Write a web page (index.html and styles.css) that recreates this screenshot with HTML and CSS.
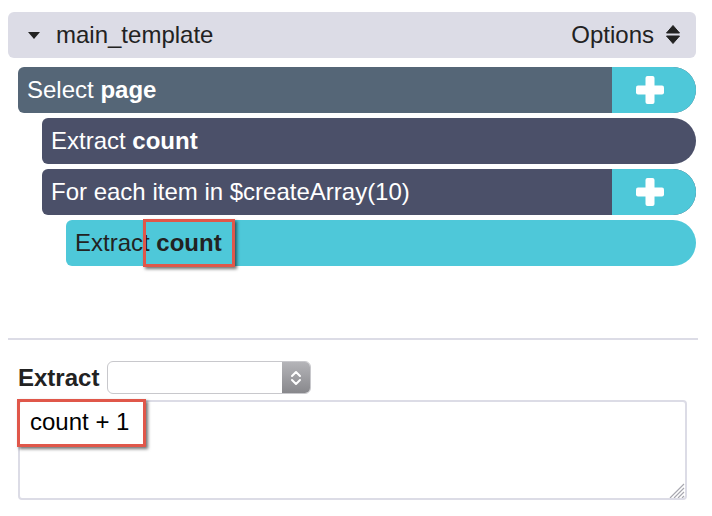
FILE: index.html
```html
<!DOCTYPE html>
<html lang="en">
<head>
  <meta charset="UTF-8" />
  <title>main_template</title>
  <link rel="stylesheet" href="styles.css">
</head>
<body>
  <div class="page">
    <div class="header">
      <svg class="caret" width="12" height="7" viewBox="0 0 12 7"><path d="M0 0H12L6 7Z" fill="#222"/></svg>
      <span class="title">main_template</span>
      <span class="options">Options
        <svg class="sort" width="14" height="20" viewBox="0 0 14 20"><path d="M7 0.5L13.5 8H0.5Z M0.5 11H13.5L7 18.5Z" fill="#222" stroke="#222" stroke-linejoin="round" stroke-width="1"/></svg>
      </span>
    </div>

    <div class="tree">
      <div class="row slate">
        <div class="label">Select <b>page</b></div>
        <div class="plus"><svg width="28" height="28" viewBox="0 0 28 28"><rect x="9.5" y="0" width="9" height="28" rx="2" fill="#fff"/><rect x="0" y="9.5" width="28" height="9" rx="2" fill="#fff"/></svg></div>
      </div>
      <div class="row dark indent1">
        <div class="label">Extract <b>count</b></div>
      </div>
      <div class="row dark indent1">
        <div class="label">For each item in $createArray(10)</div>
        <div class="plus"><svg width="28" height="28" viewBox="0 0 28 28"><rect x="9.5" y="0" width="9" height="28" rx="2" fill="#fff"/><rect x="0" y="9.5" width="28" height="9" rx="2" fill="#fff"/></svg></div>
      </div>
      <div class="row teal indent2">
        <div class="label">Extract <b class="mark mark-row">count</b></div>
      </div>
    </div>

    <div class="divider"></div>

    <div class="editor">
      <div class="field-row">
        <label class="field-label">Extract</label>
        <div class="select">
          <div class="select-arrows"><svg width="12" height="18" viewBox="0 0 12 18"><path d="M2 7L6 3L10 7 M2 11L6 15L10 11" fill="none" stroke="#fff" stroke-width="2" stroke-linecap="round" stroke-linejoin="round"/></svg></div>
        </div>
      </div>
      <div class="code">
        <span class="mark mark-code">count + 1</span>
        <svg class="grip" width="18" height="16" viewBox="0 0 18 16"><path d="M17 2L3 16 M17 6L7 16 M17 10L11 16 M17 14L15 16" stroke="#a8a8b0" stroke-width="1.2"/></svg>
      </div>
    </div>
  </div>
</body>
</html>
```

FILE: styles.css
```css
* { box-sizing: border-box; margin: 0; padding: 0; }
body {
  font-family: 'Liberation Sans', Arial, sans-serif;
  font-size: 24px;
  color: #222;
  background: #fff;
}
.page {
  padding: 12px 16px 0 8px;
}
.header {
  height: 46px;
  background: #dcdce6;
  border-radius: 6px;
  display: flex;
  align-items: center;
  padding: 0 16px 0 20px;
}
.caret { margin-right: 16px; }
.title { flex: 1; }
.options {
  display: flex;
  align-items: center;
  gap: 12px;
}
.tree {
  padding-left: 10px;
  margin-top: 9px;
}
.row {
  height: 46px;
  display: flex;
  border-radius: 6px 23px 23px 6px;
  overflow: hidden;
  margin-bottom: 5px;
  color: #fff;
}
.row .label {
  flex: 1;
  padding-left: 9px;
  line-height: 46px;
  white-space: nowrap;
}
.plus {
  width: 84px;
  background: #4ec8d9;
  display: flex;
  align-items: center;
  justify-content: center;
  padding-right: 8px;
}
.slate { background: #556677; }
.dark { background: #4b5069; }
.teal { background: #4ec8d9; color: #222; overflow: visible; }
.indent1 { margin-left: 24px; }
.indent2 { margin-left: 48px; }

.mark {
  position: relative;
  display: inline-block;
}
.mark::after {
  content: "";
  position: absolute;
  border: 3px solid #e0574a;
  box-shadow: 2px 2px 3px rgba(0,0,0,0.55);
}
.mark-row { line-height: 46px; }
.mark-row::after { top: -1px; bottom: -1px; left: -13px; right: -13px; }

.divider {
  height: 2px;
  background: #dcdce6;
  margin: 72px -2px 0 0;
}
.editor {
  padding-left: 10px;
  padding-right: 9px;
}
.field-row {
  display: flex;
  align-items: center;
  gap: 8px;
  margin-top: 21px;
}
.field-label { font-weight: bold; }
.select {
  width: 204px;
  height: 33px;
  border: 1px solid #c8c8cc;
  border-radius: 6px;
  background: #fff;
  display: flex;
  justify-content: flex-end;
  overflow: hidden;
}
.select-arrows {
  width: 28px;
  background: linear-gradient(#b4b4b8, #88888c);
  display: flex;
  align-items: center;
  justify-content: center;
}
.code {
  position: relative;
  height: 100px;
  margin-top: 6px;
  border: 2px solid #dcdce6;
  border-radius: 4px;
  padding: 0 10px;
  color: #000;
}
.mark-code { line-height: 40px; }
.mark-code::after { top: -3px; bottom: -5px; left: -13px; right: -17px; }
.grip {
  position: absolute;
  right: 0;
  bottom: 0;
}
```
